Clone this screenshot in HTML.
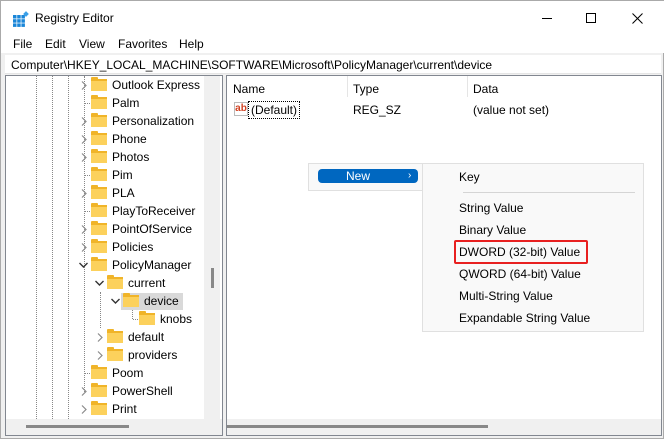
<!DOCTYPE html>
<html><head><meta charset="utf-8"><style>
*{margin:0;padding:0;box-sizing:border-box}
body{width:664px;height:439px;overflow:hidden;background:#f0f0f0;font-family:"Liberation Sans",sans-serif;font-size:12px;color:#000;position:relative}
.abs{position:absolute}
.win{position:absolute;left:0;top:0;width:664px;height:439px;border:1px solid #aaa;background:#f0f0f0}
.title{position:absolute;left:0;top:0;width:664px;height:34px;background:#fff}
.menu{position:absolute;left:0;top:34px;width:664px;height:18px;background:#fff}
.menu span{position:absolute;top:2px;font-size:12px}
.addr{position:absolute;left:4px;top:54px;width:656px;height:19px;background:#fff;border-bottom:1px solid #e5e5e5;padding:3px 0 0 6px;font-size:12px}
.lp{position:absolute;left:4px;top:74px;width:218px;height:361px;background:#fff;border:1px solid #828790;overflow:hidden}
.rp{position:absolute;left:225px;top:74px;width:436px;height:361px;background:#fff;border:1px solid #828790;overflow:hidden}
.r{position:absolute;height:18px;line-height:18px;white-space:nowrap}
.f{position:absolute;top:3px;left:0;width:16px;height:12px;background:#fcd15c;border-top:2px solid #f0b429}
.f:before{content:"";position:absolute;left:0;top:-4px;width:7px;height:3px;background:#f0b429;border-radius:1px 1px 0 0}
.t{position:absolute;left:21px;top:0}
.c{position:absolute;left:-10px;top:5px}
.d{position:absolute;left:-12px;top:6px}
.dv{position:absolute;width:0;border-left:1px dotted #888}
.dh{position:absolute;height:0;border-top:1px dotted #888}
</style></head><body>
<svg width="0" height="0" style="position:absolute"><defs>
<symbol id="cr" viewBox="0 0 6 9"><path d="M1 0.5L5 4.5L1 8.5" fill="none" stroke="#8a8a8a" stroke-width="1.2"/></symbol>
<symbol id="cd" viewBox="0 0 9 6"><path d="M0.5 1L4.5 5L8.5 1" fill="none" stroke="#333" stroke-width="1.4"/></symbol>
</defs></svg>
<div class="win">
<div class="title">
 <svg class="abs" style="left:12px;top:10px" width="16" height="16" viewBox="0 0 16 16"><g fill="#1a86d8"><rect x="0" y="4" width="3.5" height="3.5"/><rect x="4.2" y="4" width="3.5" height="3.5"/><rect x="8.4" y="4" width="3.5" height="3.5"/><rect x="0" y="8.2" width="3.5" height="3.5"/><rect x="4.2" y="8.2" width="3.5" height="3.5"/><rect x="8.4" y="8.2" width="3.5" height="3.5"/><rect x="0" y="12.4" width="3.5" height="3.5"/><rect x="4.2" y="12.4" width="3.5" height="3.5"/><rect x="8.4" y="12.4" width="3.5" height="3.5"/></g><rect x="11" y="1" width="4" height="4" fill="#3aa0e8" transform="rotate(45 13 3)"/></svg>
 <span class="abs" style="left:34px;top:10px;font-size:12px">Registry Editor</span>
 <div class="abs" style="left:541px;top:17px;width:10px;height:1px;background:#000"></div>
 <div class="abs" style="left:585px;top:12px;width:10px;height:10px;border:1px solid #000"></div>
 <svg class="abs" style="left:631px;top:12px" width="11" height="11"><path d="M0.5 0.5L10.5 10.5M10.5 0.5L0.5 10.5" stroke="#000" stroke-width="1"/></svg>
</div>
<div class="menu"><span style="left:12px">File</span><span style="left:44px">Edit</span><span style="left:78px">View</span><span style="left:117px">Favorites</span><span style="left:178px">Help</span></div>
<div class="addr">Computer\HKEY_LOCAL_MACHINE\SOFTWARE\Microsoft\PolicyManager\current\device</div>

<div class="lp">
 <div class="dv" style="left:30px;top:0;height:361px"></div>
 <div class="dv" style="left:46px;top:0;height:361px"></div>
 <div class="dv" style="left:62px;top:0;height:361px"></div>
 <div class="dv" style="left:78px;top:0;height:316px"></div>
 <div class="dh" style="left:79px;top:27px;width:5px"></div>
 <div class="dh" style="left:79px;top:99px;width:5px"></div>
 <div class="dh" style="left:79px;top:135px;width:5px"></div>
 <div class="dh" style="left:79px;top:297px;width:5px"></div>
 <div class="dv" style="left:94px;top:216px;height:36px"></div>
 <div class="dv" style="left:126px;top:234px;height:9px"></div>
 <div class="dh" style="left:127px;top:243px;width:5px"></div>
 <div class="r" style="left:85px;top:0"><svg class="c" width="6" height="9"><use href="#cr"/></svg><span class="f"></span><span class="t">Outlook Express</span></div>
 <div class="r" style="left:85px;top:18px"><span class="f"></span><span class="t">Palm</span></div>
 <div class="r" style="left:85px;top:36px"><svg class="c" width="6" height="9"><use href="#cr"/></svg><span class="f"></span><span class="t">Personalization</span></div>
 <div class="r" style="left:85px;top:54px"><svg class="c" width="6" height="9"><use href="#cr"/></svg><span class="f"></span><span class="t">Phone</span></div>
 <div class="r" style="left:85px;top:72px"><svg class="c" width="6" height="9"><use href="#cr"/></svg><span class="f"></span><span class="t">Photos</span></div>
 <div class="r" style="left:85px;top:90px"><span class="f"></span><span class="t">Pim</span></div>
 <div class="r" style="left:85px;top:108px"><svg class="c" width="6" height="9"><use href="#cr"/></svg><span class="f"></span><span class="t">PLA</span></div>
 <div class="r" style="left:85px;top:126px"><span class="f"></span><span class="t">PlayToReceiver</span></div>
 <div class="r" style="left:85px;top:144px"><svg class="c" width="6" height="9"><use href="#cr"/></svg><span class="f"></span><span class="t">PointOfService</span></div>
 <div class="r" style="left:85px;top:162px"><svg class="c" width="6" height="9"><use href="#cr"/></svg><span class="f"></span><span class="t">Policies</span></div>
 <div class="r" style="left:85px;top:180px"><svg class="d" width="9" height="6"><use href="#cd"/></svg><span class="f"></span><span class="t">PolicyManager</span></div>
 <div class="r" style="left:101px;top:198px"><svg class="d" width="9" height="6"><use href="#cd"/></svg><span class="f"></span><span class="t">current</span></div>
 <div class="abs" style="left:115px;top:217px;width:62px;height:17px;background:#d9d9d9"></div>
 <div class="r" style="left:117px;top:216px"><svg class="d" width="9" height="6"><use href="#cd"/></svg><span class="f"></span><span class="t">device</span></div>
 <div class="r" style="left:133px;top:234px"><span class="f"></span><span class="t">knobs</span></div>
 <div class="r" style="left:101px;top:252px"><svg class="c" width="6" height="9"><use href="#cr"/></svg><span class="f"></span><span class="t">default</span></div>
 <div class="r" style="left:101px;top:270px"><svg class="c" width="6" height="9"><use href="#cr"/></svg><span class="f"></span><span class="t">providers</span></div>
 <div class="r" style="left:85px;top:288px"><span class="f"></span><span class="t">Poom</span></div>
 <div class="r" style="left:85px;top:306px"><svg class="c" width="6" height="9"><use href="#cr"/></svg><span class="f"></span><span class="t">PowerShell</span></div>
 <div class="r" style="left:85px;top:324px"><svg class="c" width="6" height="9"><use href="#cr"/></svg><span class="f"></span><span class="t">Print</span></div>
 <div class="abs" style="left:198px;top:0;width:16px;height:343px;background:#f0f0f0"></div>
 <div class="abs" style="left:205px;top:192px;width:3px;height:20px;background:#888"></div>
 <div class="abs" style="left:0;top:343px;width:216px;height:16px;background:#f0f0f0"></div>
 <div class="abs" style="left:20px;top:349px;width:103px;height:3px;background:#888"></div>
</div>

<div class="rp">
 <div class="abs" style="left:6px;top:6px">Name</div>
 <div class="abs" style="left:120px;top:0;width:1px;height:21px;background:#e5e5e5"></div>
 <div class="abs" style="left:126px;top:6px">Type</div>
 <div class="abs" style="left:240px;top:0;width:1px;height:21px;background:#e5e5e5"></div>
 <div class="abs" style="left:246px;top:6px">Data</div>
 <div class="abs" style="left:7px;top:26px;width:14px;height:14px;border:1px solid #bbb;background:#fff;color:#d04020;font-weight:bold;font-size:10px;line-height:12px;text-align:center">ab</div>
 <div class="abs" style="left:21px;top:25px;padding:1px 2px;border:1px dotted #000">(Default)</div>
 <div class="abs" style="left:126px;top:27px">REG_SZ</div>
 <div class="abs" style="left:246px;top:27px">(value not set)</div>
 <div class="abs" style="left:0;top:343px;width:434px;height:16px;background:#f0f0f0"></div>
 <div class="abs" style="left:0;top:349px;width:261px;height:3px;background:#888"></div>
</div>

<div class="abs" style="left:307px;top:162px;width:116px;height:28px;background:#f9f9f9;border:1px solid #e0e0e0"></div>
<div class="abs" style="left:317px;top:168px;width:100px;height:14px;background:#0067c0;border-radius:4px;color:#fff;line-height:14px"><span style="position:absolute;left:28px">New</span><span style="position:absolute;left:90px;font-size:10px">›</span></div>
<div class="abs" style="left:421px;top:162px;width:222px;height:169px;background:#f9f9f9;border:1px solid #e0e0e0">
 <div class="abs" style="left:36px;top:6px">Key</div>
 <div class="abs" style="left:40px;top:28px;width:172px;height:1px;background:#d5d5d5"></div>
 <div class="abs" style="left:36px;top:37px">String Value</div>
 <div class="abs" style="left:36px;top:59px">Binary Value</div>
 <div class="abs" style="left:31px;top:76px;width:134px;height:24px;border:2px solid #e82020;border-radius:2px"></div>
 <div class="abs" style="left:36px;top:81px">DWORD (32-bit) Value</div>
 <div class="abs" style="left:36px;top:103px">QWORD (64-bit) Value</div>
 <div class="abs" style="left:36px;top:125px">Multi-String Value</div>
 <div class="abs" style="left:36px;top:147px">Expandable String Value</div>
</div>
</div>
</body></html>
